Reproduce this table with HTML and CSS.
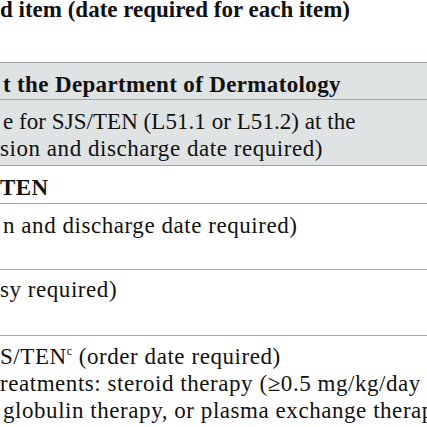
FILE: index.html
```html
<!DOCTYPE html>
<html>
<head>
<meta charset="utf-8">
<link rel="stylesheet" href="styles.css">
</head>
<body>
<div class="page">
  <div class="title">d item (date required for each item)</div>
  <div class="table">
    <div class="band">
      <div class="row head"><span class="line bold in">t the Department of Dermatology</span></div>
      <div class="row r2">
        <span class="line in tight">e for SJS/TEN (L51.1 or L51.2) at the</span>
        <span class="line">sion and discharge date required)</span>
      </div>
    </div>
    <div class="row r3"><span class="line bold">TEN</span></div>
    <div class="row r4"><span class="line in">n and discharge date required)</span></div>
    <div class="row r5"><span class="line">sy required)</span></div>
    <div class="row r6">
      <span class="line">S/TEN<sup>c</sup> (order date required)</span>
      <span class="line">reatments: steroid therapy (≥0.5 mg/kg/day</span>
      <span class="line in">globulin therapy, or plasma exchange therap</span>
    </div>
  </div>
</div>
</body>
</html>
```

FILE: styles.css
```css
html, body {
  margin: 0;
  padding: 0;
  background: #ffffff;
}
.page {
  width: 427px;
  height: 427px;
  overflow: hidden;
  font-family: "Liberation Serif", "Times New Roman", serif;
  color: #111111;
  font-size: 23px;
  line-height: 27px;
}
.title {
  height: 62px;
  line-height: 19px;
  font-weight: bold;
  white-space: nowrap;
  border-bottom: 1px solid #a2a5a5;
}
.line {
  display: block;
  white-space: nowrap;
  letter-spacing: 0.55px;
}
.tight {
  letter-spacing: 0.05px;
}
.in {
  padding-left: 3px;
}
.bold {
  font-weight: bold;
  letter-spacing: 0.35px;
}
.band {
  background: #dfe3e3;
}
.row {
  border-bottom: 1px solid #a2a5a5;
}
.head { padding: 8px 0 1px; }
.r2 { padding: 8px 0 3px; }
.r3 { padding: 8px 0 2px; }
.r4 { padding: 8px 0 30px; }
.r5 { padding: 6px 0 32px; }
.r6 { padding: 7px 0 0; border-bottom: none; }

sup {
  font-size: 12px;
  line-height: 0;
  vertical-align: 9px;
}
```
